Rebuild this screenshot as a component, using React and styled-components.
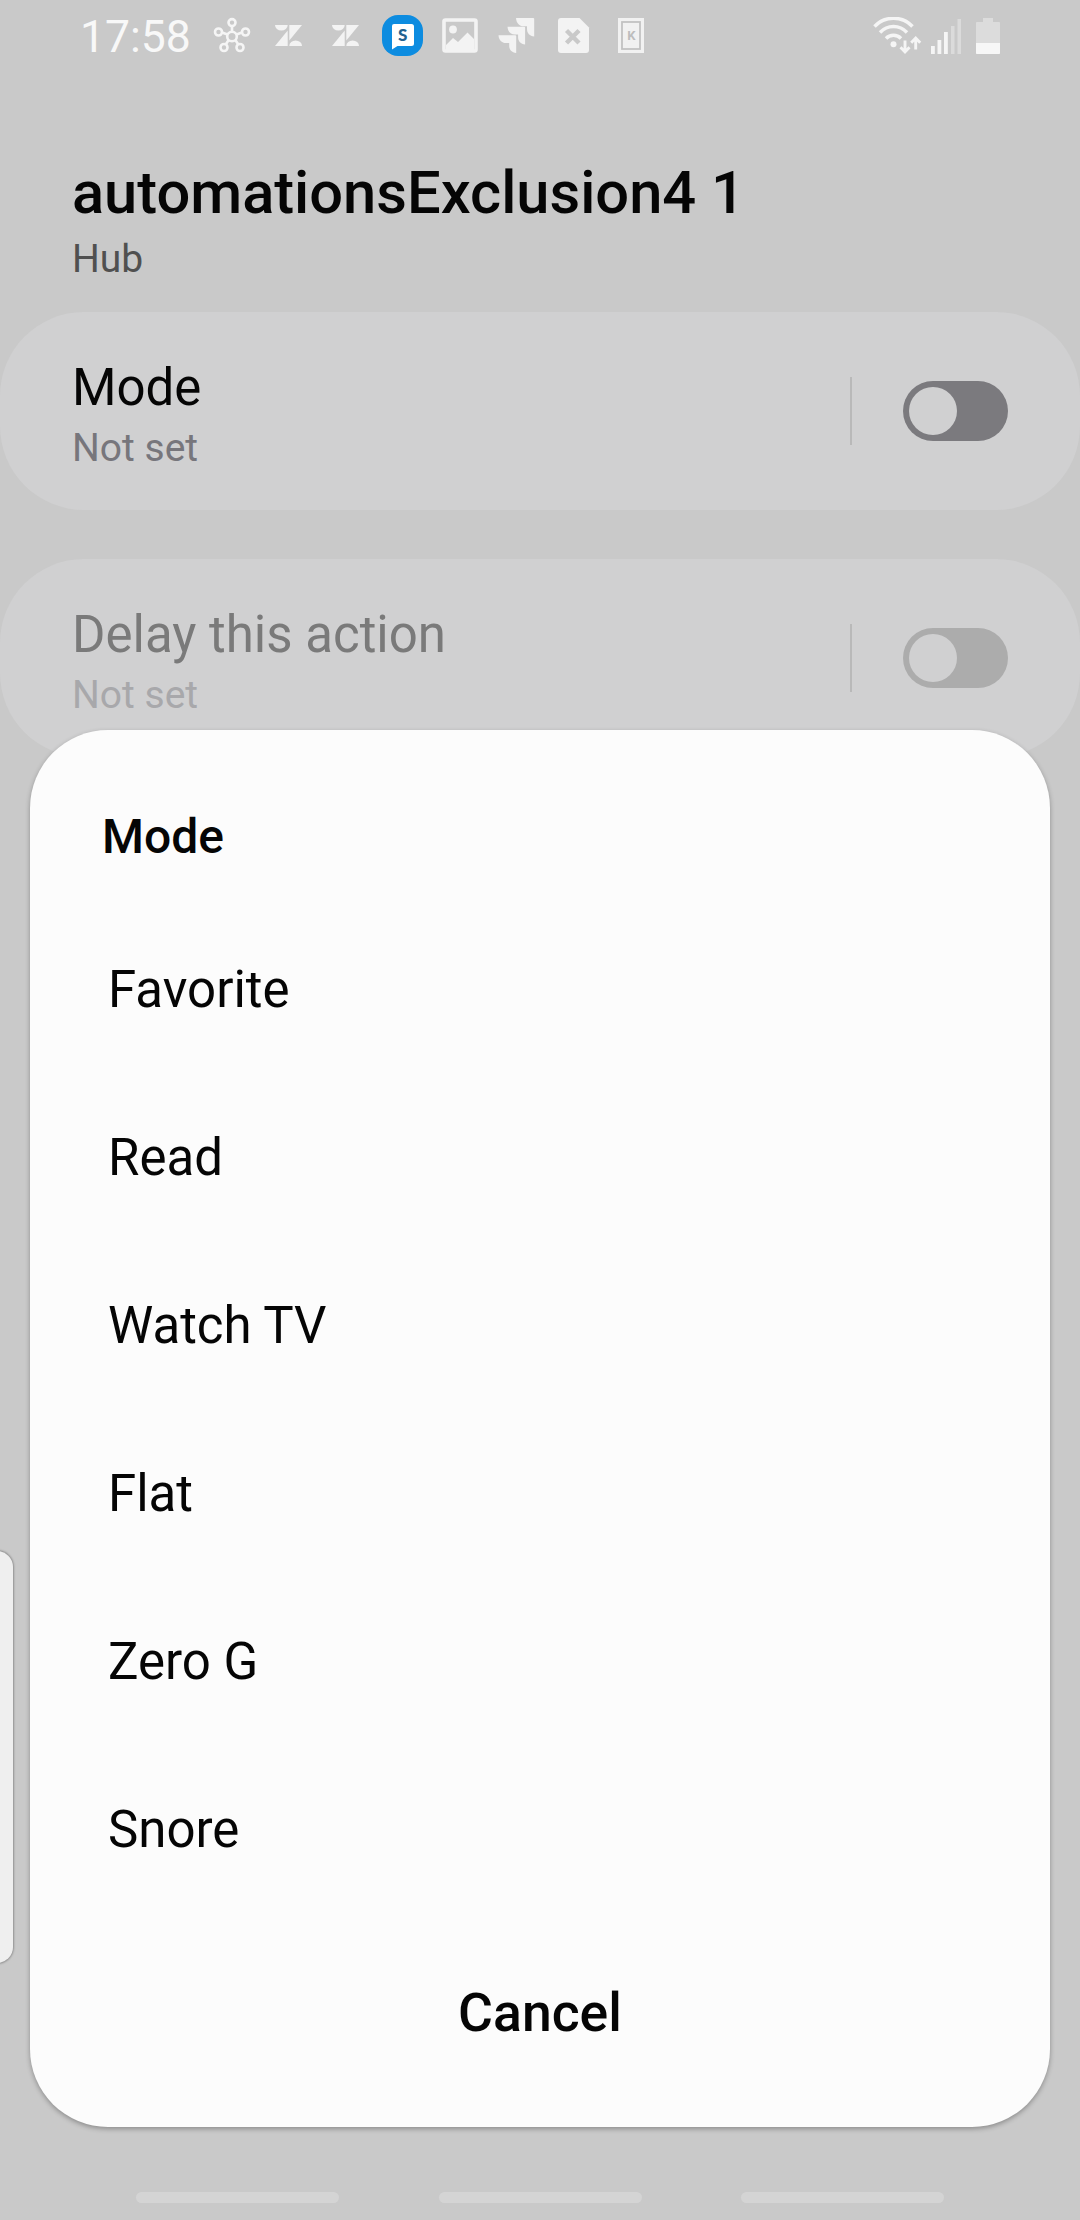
import React from "react";
import styled, { createGlobalStyle } from "styled-components";

const modes = ["Favorite", "Read", "Watch TV", "Flat", "Zero G", "Snore"];

const HubIcon = () => (
  <Glyph $w={38} $h={38} viewBox="0 0 38 38">
    <g fill="none" stroke="#f5f5f5" strokeWidth="2.6">
      <path d="M19 9v5M9 15.5l5.5 2M29 15.5l-5.5 2M13 27l3-4.5M25 27l-3-4.5" />
      <circle cx="19" cy="19.5" r="4.8" />
      <circle cx="19" cy="5.6" r="3.5" />
      <circle cx="5.5" cy="15" r="3.5" />
      <circle cx="32.5" cy="15" r="3.5" />
      <circle cx="11" cy="30.5" r="3.5" />
      <circle cx="27" cy="30.5" r="3.5" />
    </g>
  </Glyph>
);

const ZendeskIcon = () => (
  <Glyph $w={27} $h={21} viewBox="0 0 27 21">
    <g fill="#f3f3f3">
      <path d="M0 0h12.7a6.35 5.6 0 0 1-12.7 0z" />
      <path d="M12.7 5.5V21H0z" />
      <path d="M14.3 0H27L14.3 15.5z" />
      <path d="M14.3 21a6.35 5.6 0 0 1 12.7 0z" />
    </g>
  </Glyph>
);

const GalleryIcon = () => (
  <Glyph $w={36} $h={35} viewBox="0 0 36 35">
    <rect x="2" y="2" width="32" height="31" rx="1.5" fill="none" stroke="#f3f3f3" strokeWidth="3.6" />
    <circle cx="11" cy="11.5" r="3.9" fill="#f3f3f3" />
    <path d="M4 27l7-7 5 4 9.5-9.5L32 21v12H4z" fill="#f3f3f3" />
  </Glyph>
);

const JiraIcon = () => (
  <Glyph $w={37} $h={36} viewBox="0 0 37 36">
    <g fill="#f3f3f3">
      <path d="M18 0h17.2a1 1 0 0 1 1 1v17.5c-4.5-.4-7.2-3.3-7.2-7.5V8.3h-3.2C21.3 8.3 18.3 5 18 0z" />
      <path d="M9.5 8.7h16.6a1 1 0 0 1 1 1v16.8c-4.3-.4-7-3.2-7-7.2V16.6h-3C12.7 16.6 9.8 13.5 9.5 8.7z" />
      <path d="M.5 17.3h16.7a1 1 0 0 1 1 1V35c-4.4-.4-7-3.2-7-7.2v-2.7H8C3.7 25.1.8 22 .5 17.3z" />
    </g>
  </Glyph>
);

const FileErrorIcon = () => (
  <Glyph $w={32} $h={36} viewBox="0 0 32 36">
    <path d="M3 0h18.5L31 9.5V32a3 3 0 0 1-3 3H3a3 3 0 0 1-3-3V3a3 3 0 0 1 3-3z" fill="#f3f3f3" />
    <path d="M8.5 12.5L21 25M21 12.5L8.5 25" stroke="#c9c9c9" strokeWidth="4.4" />
  </Glyph>
);

const WifiIcon = () => (
  <Glyph $w={50} $h={38} viewBox="0 0 50 38">
    <g fill="none" stroke="#f5f5f5" strokeWidth="3.4">
      <path d="M1.5 9.5c10-11 28-11 38 0" />
      <path d="M7 15.5c7.5-8 19.5-8 27 0" />
      <path d="M13 21.5c4-4.3 11-4.3 15 0" />
    </g>
    <circle cx="20.5" cy="27.3" r="3" fill="#f5f5f5" />
    <path
      d="M32 23.5v11M27.5 30.3l4.5 4.7 4.5-4.7M42.7 32.5v-11M38.2 25.7l4.5-4.7 4.5 4.7"
      fill="none"
      stroke="#f5f5f5"
      strokeWidth="2.9"
    />
  </Glyph>
);

const SignalIcon = () => (
  <Glyph $w={31} $h={36} viewBox="0 0 31 36">
    <g fill="#f5f5f5">
      <rect x="0" y="28" width="3.8" height="8" />
      <rect x="6.5" y="22" width="3.8" height="14" />
      <rect x="13" y="14" width="3.8" height="22" />
    </g>
    <g fill="#dbdbdb">
      <rect x="20" y="8" width="3.5" height="28" />
      <rect x="26.5" y="1" width="3.5" height="35" />
    </g>
  </Glyph>
);

const BatteryIcon = () => (
  <Glyph $w={24} $h={36} viewBox="0 0 24 36">
    <path d="M7 0h10v4h6a1 1 0 0 1 1 1v30a1 1 0 0 1-1 1H1a1 1 0 0 1-1-1V5a1 1 0 0 1 1-1h6z" fill="#dcdcdc" />
    <path d="M0 25h24v10a1 1 0 0 1-1 1H1a1 1 0 0 1-1-1z" fill="#f7f7f7" />
  </Glyph>
);

const MessageIcon = () => (
  <MessageBadge>
    <svg width="41" height="41" viewBox="0 0 41 41">
      <path
        d="M12 9h17.5a2.5 2.5 0 0 1 2.5 2.5v17a2.5 2.5 0 0 1-2.5 2.5H15.5L10 34.5V11a2 2 0 0 1 2-2z"
        fill="#fff"
      />
      <text x="20.8" y="26" textAnchor="middle" fontFamily="Lato, sans-serif" fontWeight="900" fontSize="17" fill="#23628f">
        S
      </text>
    </svg>
  </MessageBadge>
);

const KnoxIcon = () => (
  <Glyph $w={26} $h={35} viewBox="0 0 26 35">
    <rect width="26" height="35" fill="#f1f1f1" />
    <rect x="4" y="4" width="18" height="27" fill="none" stroke="#c2c2c2" strokeWidth="1.8" />
    <text x="13.3" y="21.5" textAnchor="middle" fontFamily="Roboto, sans-serif" fontWeight="700" fontSize="13" fill="#bdbdbd">
      K
    </text>
  </Glyph>
);

const SettingCard = ({ title, value, disabled }) => (
  <Card>
    <CardText>
      <CardTitle $disabled={disabled}>{title}</CardTitle>
      <CardValue $disabled={disabled}>{value}</CardValue>
    </CardText>
    <Divider />
    <Toggle $disabled={disabled}>
      <Knob />
    </Toggle>
  </Card>
);

const App = () => {
  return (
    <Screen>
      <GlobalStyle />
      <StatusBar>
        <Clock>17:58</Clock>
        <Notifications>
          <HubIcon />
          <ZendeskIcon />
          <ZendeskIcon />
          <MessageIcon />
          <GalleryIcon />
          <JiraIcon />
          <FileErrorIcon />
          <KnoxIcon />
        </Notifications>
        <SystemIcons>
          <WifiIcon />
          <SignalIcon />
          <BatteryIcon />
        </SystemIcons>
      </StatusBar>

      <Header>
        <h1>automationsExclusion4 1</h1>
        <p>Hub</p>
      </Header>

      <Cards>
        <SettingCard title="Mode" value="Not set" />
        <SettingCard title="Delay this action" value="Not set" disabled />
      </Cards>

      <EdgeHandle />

      {/* Mode picker */}
      <Dialog>
        <DialogTitle>Mode</DialogTitle>
        <ModeList>
          {modes.map((mode) => (
            <li key={mode}>{mode}</li>
          ))}
        </ModeList>
        <CancelButton>Cancel</CancelButton>
      </Dialog>

      <NavBar>
        <span />
        <span />
        <span />
      </NavBar>
    </Screen>
  );
};

// Styled Components
const GlobalStyle = createGlobalStyle`
  * {
    box-sizing: border-box;
  }

  body {
    margin: 0;
    background-color: #c9c9c9;
    font-family: Roboto, "Liberation Sans", sans-serif;
  }
`;

const Screen = styled.div`
  position: relative;
  display: flex;
  flex-direction: column;
  width: 1080px;
  height: 2220px;
  overflow: hidden;
  background-color: #c9c9c9;
`;

const StatusBar = styled.div`
  display: flex;
  align-items: center;
  height: 71px;
  padding: 0 80px;
`;

const Clock = styled.div`
  width: 132px;
  padding-top: 3px;
  font-size: 44.5px;
  line-height: 68px;
  color: #f8f8f8;
`;

const Notifications = styled.div`
  display: grid;
  grid-template-columns: repeat(8, 57px);
  align-items: center;
  justify-items: center;
  margin-left: -9px;
`;

const SystemIcons = styled.div`
  display: flex;
  align-items: center;
  gap: 14px;
  margin-left: auto;

  svg:first-child {
    margin-right: -6px;
  }
`;

const Glyph = styled.svg`
  display: block;
  flex: none;
  width: ${({ $w }) => $w}px;
  height: ${({ $h }) => $h}px;
`;

const MessageBadge = styled.div`
  width: 41px;
  height: 41px;
  border-radius: 16px;
  background-color: #0d8ce0;

  svg {
    display: block;
  }
`;

const Header = styled.header`
  height: 241px;
  padding: 87px 72px 0;

  h1 {
    margin: 0 0 8px;
    font-size: 59.6px;
    font-weight: 500;
    line-height: 70px;
    color: #050505;
  }

  p {
    margin: 0;
    font-size: 39px;
    line-height: 46px;
    color: #505050;
  }
`;

const Cards = styled.main`
  display: flex;
  flex-direction: column;
  gap: 49px;
`;

const Card = styled.section`
  display: flex;
  align-items: center;
  height: 198px;
  padding: 0 72px;
  border-radius: 84px;
  background-color: #d0d0d1;
`;

const CardText = styled.div`
  flex: 1;
  display: flex;
  flex-direction: column;
  gap: 7px;
  align-self: flex-start;
  padding-top: 46px;
`;

const CardTitle = styled.div`
  font-size: 51px;
  line-height: 60px;
  color: ${({ $disabled }) => ($disabled ? "#7a7a7a" : "#050505")};
`;

const CardValue = styled.div`
  font-size: 39px;
  line-height: 46px;
  color: ${({ $disabled }) => ($disabled ? "#a8a8ab" : "#77767c")};
`;

const Divider = styled.div`
  width: 2px;
  height: 68px;
  margin-right: 51px;
  background-color: #b9b9b9;
`;

const Toggle = styled.div`
  display: flex;
  align-items: center;
  width: 105px;
  height: 60px;
  padding: 0 6px;
  border-radius: 30px;
  background-color: ${({ $disabled }) => ($disabled ? "#acacac" : "#7b7a7e")};
`;

const Knob = styled.div`
  width: 48px;
  height: 48px;
  border-radius: 50%;
  background-color: #d0d0d1;
`;

const EdgeHandle = styled.div`
  position: absolute;
  top: 1551px;
  left: -20px;
  width: 33px;
  height: 412px;
  border-radius: 16px;
  background-color: #efefef;
  box-shadow: 0 0 2px 1px rgba(0, 0, 0, 0.28);
`;

const Dialog = styled.div`
  position: absolute;
  top: 730px;
  left: 30px;
  display: flex;
  flex-direction: column;
  width: 1020px;
  height: 1397px;
  padding-top: 79px;
  border-radius: 78px;
  background-color: #fcfcfc;
  box-shadow: 0 2px 5px rgba(0, 0, 0, 0.3);
`;

const DialogTitle = styled.h2`
  margin: 0 0 41px;
  padding: 0 72px;
  font-size: 48px;
  font-weight: 500;
  line-height: 56px;
  color: #050505;
`;

const ModeList = styled.ul`
  margin: 0;
  padding: 0 78px;
  list-style: none;

  li {
    height: 168px;
    font-size: 51px;
    line-height: 168px;
    color: #050505;
  }
`;

const CancelButton = styled.button`
  width: 100%;
  height: 100px;
  margin-top: 49px;
  padding: 0;
  border: 0;
  background: none;
  font-family: inherit;
  font-size: 53.5px;
  font-weight: 500;
  line-height: 100px;
  color: #050505;
`;

const NavBar = styled.nav`
  display: flex;
  justify-content: space-between;
  margin-top: auto;
  padding: 0 136px 17px;

  span {
    width: 203px;
    height: 11px;
    border-radius: 6px;
    background-color: #d4d4d4;
  }
`;

export default App;
